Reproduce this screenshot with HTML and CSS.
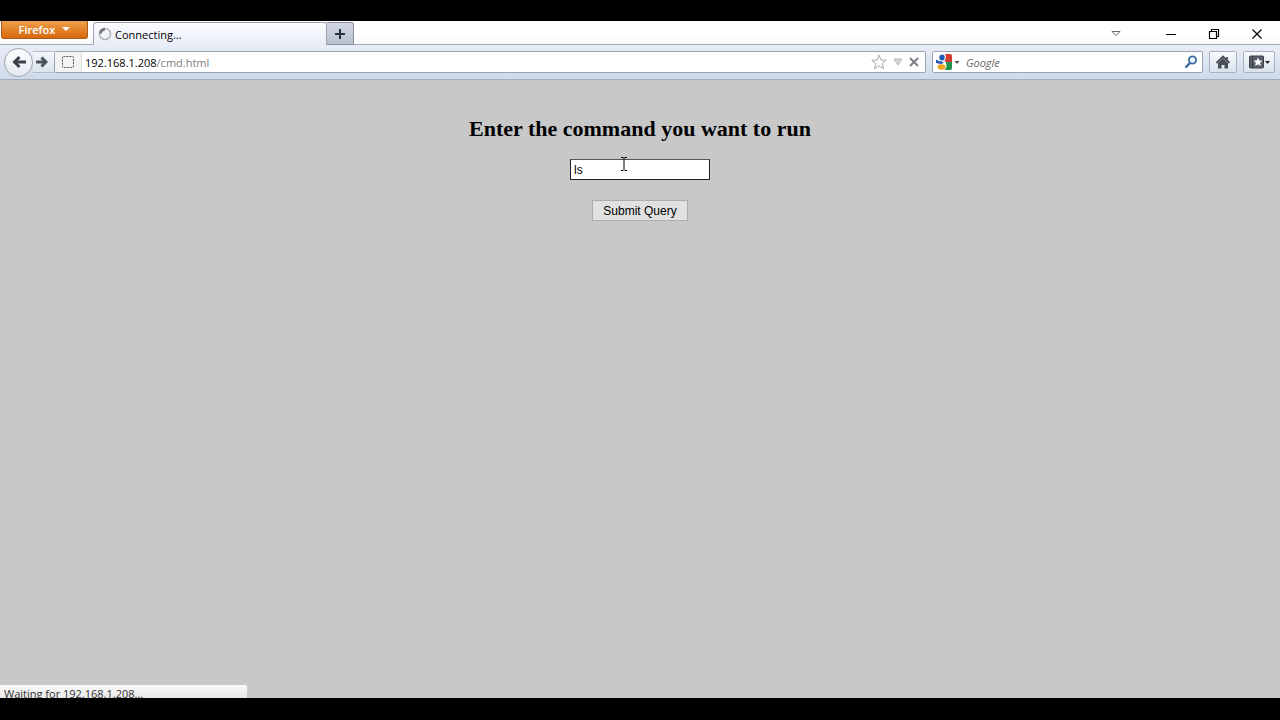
FILE: index.html
```html
<!DOCTYPE html>
<html lang="en">

<head>
    <meta charset="UTF-8">
    <meta name="viewport" content="width=device-width, initial-scale=1.0">
    <title>Connecting...</title>
    <link rel="stylesheet" href="styles.css">
</head>

<body>
    <div class="window">
        <!-- Title bar with the tabs -->
        <header class="title-bar">
            <button class="firefox-button">Firefox <span class="arrow"></span></button>
            <div class="tab">
                <svg width="14" height="14" viewBox="0 0 14 14">
                    <circle cx="7" cy="7" r="5.500" fill="#f4f5f9" stroke="#b4b6bc" stroke-width="1.600" />
                    <path d="M2.500 6.500A4.500 4.500 0 0 1 7 2.200" fill="none" stroke="#77797f" stroke-width="3" />
                </svg>
                <span>Connecting...</span>
            </div>
            <button class="new-tab" aria-label="New tab">
                <svg width="12" height="12" viewBox="0 0 12 12">
                    <path d="M6 1v10M1 6h10" stroke="#26303f" stroke-width="2" />
                </svg>
            </button>
            <div class="window-controls">
                <button class="tab-list" aria-label="List all tabs">
                    <svg width="10" height="8" viewBox="0 0 10 8">
                        <path d="M1 1.500h8L5 5.500z" fill="#fff" stroke="#666" />
                    </svg>
                </button>
                <button aria-label="Minimize">
                    <svg width="12" height="12" viewBox="0 0 12 12">
                        <path d="M1 6.500h10" stroke="#000" />
                    </svg>
                </button>
                <button aria-label="Restore">
                    <svg width="12" height="12" viewBox="0 0 12 12">
                        <path d="M1.500 3.500h7v7h-7zM3.500 3V1.500h7v7H9" fill="none" stroke="#000" stroke-width="1.200" />
                    </svg>
                </button>
                <button aria-label="Close">
                    <svg width="12" height="12" viewBox="0 0 12 12">
                        <path d="M1.500 1.500l9 9M10.500 1.500l-9 9" stroke="#000" stroke-width="1.200" />
                    </svg>
                </button>
            </div>
        </header>

        <!-- Navigation toolbar -->
        <nav class="toolbar">
            <button class="back" aria-label="Back">
                <svg width="14" height="14" viewBox="0 0 14 14">
                    <path d="M7.500 2L2.500 7l5 5M3 7h11" fill="none" stroke="#3b424c" stroke-width="3" />
                </svg>
            </button>
            <button class="forward" aria-label="Forward">
                <svg width="12" height="14" viewBox="0 0 12 14">
                    <path d="M5.500 2.500L10 7l-4.500 4.500M9.500 7H0" fill="none" stroke="#4b535f" stroke-width="3" />
                </svg>
            </button>
            <div class="url-bar">
                <span class="site-icon">
                    <svg width="14" height="14" viewBox="0 0 14 14">
                        <rect x="1.500" y="1.500" width="11" height="11" rx="1" fill="none" stroke="#555" stroke-dasharray="2 1" />
                    </svg>
                </span>
                <a class="address" href="#">192.168.1.208<span class="path">/cmd.html</span></a>
                <button aria-label="Bookmark">
                    <svg width="16" height="16" viewBox="0 0 16 16">
                        <path d="M8 1l2 5 5.200.3-4 3.400 1.400 5L8 11.900l-4.600 2.800 1.400-5-4-3.400L6 6z" fill="#fafafa" stroke="#a6a8ac" />
                    </svg>
                </button>
                <button aria-label="History">
                    <svg width="10" height="8" viewBox="0 0 10 8">
                        <path d="M1 1h8L5 7z" fill="#d5d5d5" stroke="#b8b8b8" />
                    </svg>
                </button>
                <button aria-label="Stop">
                    <svg width="10" height="10" viewBox="0 0 10 10">
                        <path d="M1 1l8 8M9 1L1 9" stroke="#7b7e88" stroke-width="2" />
                    </svg>
                </button>
            </div>
            <div class="search-bar">
                <button class="engine" aria-label="Search engine">
                    <svg width="24" height="16" viewBox="0 0 24 16">
                        <path d="M8 0h6a2 2 0 0 1 2 2v6H8z" fill="#d33a2f" />
                        <path d="M8 8h8v6a2 2 0 0 1-2 2H8z" fill="#20944a" />
                        <path d="M6 0h3c1.500 2 1 5-.5 6.500C10 8 10.500 10 10.500 12s-1 3-2 4H2c-1 0-2-1-2-2V2C0 1 1 0 2 0z" fill="#fff" />
                        <ellipse cx="6" cy="3.600" rx="2.700" ry="3" fill="#2459b8" />
                        <path d="M0 5.500l3 1.500 3 .5 1.500 1.500L5 10 0 9z" fill="#2459b8" />
                        <ellipse cx="5.500" cy="13" rx="4" ry="2.800" fill="#eaa51c" />
                        <path d="M18.500 7h5L21 10z" fill="#555" />
                    </svg>
                </button>
                <input type="text" placeholder="Google" aria-label="Search">
                <button aria-label="Search">
                    <svg width="14" height="14" viewBox="0 0 14 14">
                        <circle cx="8.500" cy="5" r="3.600" fill="#eef6fd" stroke="#3a6c9f" stroke-width="1.800" />
                        <path d="M6 8l-4.500 4.500" stroke="#3a6c9f" stroke-width="2.400" />
                    </svg>
                </button>
            </div>
            <button class="tool home" aria-label="Home">
                <svg width="16" height="14" viewBox="0 0 16 14">
                    <path d="M1.500 8L8 1.500 14.500 8M12 2v3" fill="none" stroke="#4a4f57" stroke-width="1.800" />
                    <path d="M3 8l5-5 5 5v5.500H9.500V10h-3v3.500H3z" fill="#4a4f57" />
                </svg>
            </button>
            <button class="tool bookmarks" aria-label="Bookmarks">
                <svg width="22" height="14" viewBox="0 0 22 14">
                    <rect x="1.500" y="1" width="14" height="12" rx="1" fill="#5c626c" stroke="#3a3f48" />
                    <path d="M4.500 1v12" stroke="#343942" />
                    <path d="M10 2.500l1.300 2.900 3.200.3-2.400 2.100.7 3.200-2.800-1.700L7.200 11l.7-3.200-2.400-2.100 3.200-.3z" fill="#fff" />
                    <path d="M17 6h5l-2.500 3z" fill="#222" />
                </svg>
            </button>
        </nav>

        <!-- Page being viewed -->
        <main class="page">
            <h2><label for="command">Enter the command you want to run</label></h2>
            <form class="command-form">
                <div class="command-field">
                    <input type="text" id="command" value="ls">
                    <svg class="cursor" width="8" height="16" viewBox="0 0 8 16">
                        <path d="M1 1.500h2.500M4.500 1.500H7M4 2v12M1 14.500h2.500M4.500 14.500H7" stroke="#000" />
                    </svg>
                </div>
                <button type="submit">Submit Query</button>
            </form>
            <div class="status">Waiting for 192.168.1.208...</div>
        </main>
    </div>
</body>

</html>
```
FILE: styles.css
```css
* {
    box-sizing: border-box;
}

body {
    margin: 0;
    background-color: #000;
    font-family: "Open Sans", "Noto Sans", sans-serif;
    font-size: 11px;
}

button {
    display: flex;
    align-items: center;
    justify-content: center;
    padding: 0;
    border: none;
    background: none;
    font-family: inherit;
}

svg {
    display: block;
    flex-shrink: 0;
}

.window {
    display: flex;
    flex-direction: column;
    height: 100vh;
    padding: 21px 0 22px;
}

/* Title bar */
.title-bar {
    display: flex;
    align-items: flex-end;
    height: 24px;
    background: linear-gradient(#fff 60%, #f6f6f6);
    box-shadow: inset 0 -1px #a3acb8;
}

.firefox-button {
    align-self: flex-start;
    gap: 7px;
    width: 87px;
    height: 18px;
    margin-left: 1px;
    padding-bottom: 1px;
    border: 1px solid #a85c19;
    border-top: none;
    border-radius: 0 0 3px 3px;
    background: linear-gradient(#eda04b, #d9680b);
    color: #fff;
    font-size: 11px;
    font-weight: 600;
}

.arrow {
    border: 4px solid transparent;
    border-top: 4px solid #fff;
    border-bottom: none;
}

.tab {
    display: flex;
    align-items: center;
    gap: 3px;
    width: 234px;
    height: 23px;
    margin-left: 5px;
    padding-left: 4px;
    border: 1px solid #9da3ae;
    border-bottom: none;
    border-radius: 3px 3px 0 0;
    background: linear-gradient(#fbfcff, #e9edf8);
}

.new-tab {
    width: 27px;
    height: 23px;
    border: 1px solid #8b919c;
    border-left: none;
    border-radius: 0 3px 0 0;
    background: linear-gradient(#d2d7e2, #b9c1ce);
}

.window-controls {
    display: flex;
    margin-left: auto;
    padding-right: 2px;
}

.window-controls button {
    width: 43px;
    height: 24px;
    padding-top: 2px;
}

.window-controls .tab-list {
    margin-right: 12px;
}

/* Navigation toolbar */
.toolbar {
    display: flex;
    align-items: center;
    height: 35px;
    padding: 0 5px 0 4px;
    background: linear-gradient(#e9edf7, #cedaea);
    border-bottom: 1px solid #a4acb8;
}

.back {
    width: 29px;
    height: 29px;
    border: 1px solid #9ba3b0;
    border-radius: 50%;
    background: linear-gradient(#fff, #e4e9f1);
}

.forward {
    width: 21px;
    height: 22px;
    padding-right: 4px;
    border: 1px solid #b3bbc8;
    border-width: 1px 0;
    background: linear-gradient(#f4f7fb, #dde4ee);
}

.url-bar,
.search-bar {
    display: flex;
    align-items: center;
    height: 22px;
    border: 1px solid #99a4b3;
    border-radius: 2px;
    background-color: #fff;
}

.url-bar {
    flex: 1;
    gap: 6px;
    padding-right: 6px;
}

.site-icon {
    display: flex;
    align-items: center;
    justify-content: center;
    width: 27px;
    height: 20px;
    border-right: 1px solid #dcdcdc;
    background-color: #f3f3f3;
}

.address {
    flex: 1;
    margin-left: -3px;
    color: #000;
    text-decoration: none;
}

.path {
    color: #808080;
}

.search-bar {
    width: 271px;
    margin-left: 6px;
    padding: 0 4px 0 3px;
}

.search-bar input {
    flex: 1;
    min-width: 0;
    padding: 0 6px;
    border: none;
    background: none;
    font-family: inherit;
    font-size: 11px;
}

.search-bar input::placeholder {
    color: #666;
    font-style: italic;
    opacity: 1;
}

.tool {
    height: 22px;
    margin-left: 6px;
    border: 1px solid #a8b1bf;
    border-radius: 2px;
    background: linear-gradient(#f8fafd, #dae2ed);
}

.home {
    width: 28px;
}

.bookmarks {
    width: 32px;
}

/* Page */
.page {
    position: relative;
    flex: 1;
    min-height: 0;
    overflow: hidden;
    padding-top: 35px;
    background-color: #c8c8c8;
    text-align: center;
}

.page h2 {
    margin: 0 0 16px;
    font-family: "Liberation Serif", serif;
    font-size: 22px;
    line-height: 28px;
}

.command-form {
    display: flex;
    flex-direction: column;
    align-items: center;
    gap: 20px;
}

.command-field {
    position: relative;
}

.command-field input {
    display: block;
    width: 140px;
    height: 21px;
    padding: 0 3px;
    border: 1px solid #222;
    border-top-color: #555;
    background-color: #fff;
    font-family: "Liberation Sans", Arial, sans-serif;
    font-size: 12px;
}

/* Mouse pointer over the text box */
.cursor {
    position: absolute;
    top: -3px;
    left: 50px;
}

.command-form button {
    width: 96px;
    height: 21px;
    border: 1px solid #acacac;
    background-color: #e1e1e1;
    font-family: "Liberation Sans", Arial, sans-serif;
    font-size: 12px;
}

.status {
    position: absolute;
    left: 0;
    bottom: 0;
    width: 247px;
    height: 13px;
    padding-left: 4px;
    overflow: hidden;
    border-radius: 0 2px 0 0;
    background: linear-gradient(#fafafa, #e8e8e8);
    color: #333;
    line-height: 18px;
    text-align: left;
}
```
